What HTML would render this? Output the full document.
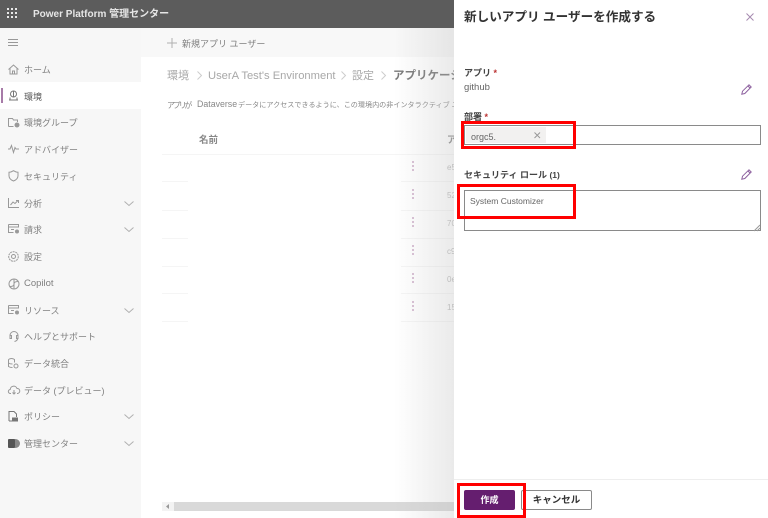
<!DOCTYPE html>
<html lang="ja"><head><meta charset="utf-8">
<style>
html,body{margin:0;padding:0;width:768px;height:518px;overflow:hidden;background:#fff}
body{position:relative;font-family:"Liberation Sans","Noto Sans CJK JP",sans-serif;color:#666;filter:blur(.35px)}
.a{position:absolute;white-space:nowrap}
.nav{position:absolute;left:24px;font-size:9px;line-height:14px;color:#808080;white-space:nowrap}
svg{position:absolute;overflow:visible}
.ic{fill:none;stroke:#999;stroke-width:1}
.ch{fill:none;stroke:#b0b0b0;stroke-width:1}
.dots{position:absolute;left:412px;width:2px;height:10px;background:repeating-linear-gradient(#d8bfd4 0 2px,transparent 2px 4px)}
.ln{position:absolute;height:1px;background:#f5f5f5}
.id{position:absolute;left:447px;font-size:8px;line-height:10px;color:#bdbdbd}
</style></head><body>
<div class="a" style="left:0;top:0;width:768px;height:28px;background:#5c5c5c"></div>
<svg style="left:7px;top:8px" width="12" height="12"><g fill="#e8e8e8"><rect x="0" y="0" width="2" height="2"/><rect x="4" y="0" width="2" height="2"/><rect x="8" y="0" width="2" height="2"/><rect x="0" y="4" width="2" height="2"/><rect x="4" y="4" width="2" height="2"/><rect x="8" y="4" width="2" height="2"/><rect x="0" y="8" width="2" height="2"/><rect x="4" y="8" width="2" height="2"/><rect x="8" y="8" width="2" height="2"/></g></svg>
<div class="a" style="left:33px;top:8px;font-size:10px;line-height:14px;font-weight:bold;color:#e6e6e6">Power Platform 管理センター</div>

<div class="a" style="left:0;top:28px;width:141px;height:490px;background:#f7f7f7"></div>
<div class="a" style="left:141px;top:28px;width:320px;height:29px;background:#f8f8f8"></div>
<div class="a" style="left:0;top:82px;width:141px;height:27px;background:#fff"></div>
<div class="a" style="left:1px;top:88px;width:2px;height:15px;background:#a77ba8"></div>

<svg style="left:8px;top:39px" width="10" height="8"><path class="ic" d="M0 .5H10M0 3.5H10M0 6.5H10"/></svg>
<svg style="left:8px;top:64px" width="11" height="11"><path class="ic" d="M.5 5.5L5.5 1l5 4.5M2 4.5V10h7V4.500M4.500 10V7h2v3"/></svg>
<svg style="left:8px;top:90px" width="11" height="11"><circle class="ic" cx="5.500" cy="4" r="3" style="stroke:#777"/><path class="ic" style="stroke:#777" d="M1 10h9M2 7.500v2.500M9 7.500v2.500M5.500 1v6"/></svg>
<svg style="left:8px;top:117px" width="12" height="11"><path class="ic" d="M.5 9.500V1.500h4l1 1.500h4v2M.5 9.500h5"/><circle cx="9" cy="8" r="2.500" fill="#999"/></svg>
<svg style="left:8px;top:144px" width="11" height="10"><path class="ic" d="M0 5h2l1.500-3.500L5.500 8.500 7 3.500 8 5h3"/></svg>
<svg style="left:8px;top:170px" width="11" height="12"><path class="ic" d="M5.500.7c1.500 1 3 1.500 4.500 1.500v3.500c0 2.500-2 4.300-4.500 5.300C3 10 1 8.200 1 5.700V2.200C2.500 2.200 4 1.700 5.500.7z"/></svg>
<svg style="left:8px;top:198px" width="11" height="10"><path class="ic" d="M.5 0v9.500H11M2.500 7l2.500-3 2 1.500 3-3M8 2.500h2.500V5"/></svg>
<svg style="left:8px;top:224px" width="12" height="10"><path class="ic" d="M.5.500h10v3M.5.500v8h5M.5 3h10M3 5.500h3"/><circle cx="9" cy="7.500" r="2" fill="#999"/></svg>
<svg style="left:8px;top:251px" width="11" height="11"><circle class="ic" cx="5.500" cy="5.500" r="2"/><circle class="ic" cx="5.500" cy="5.500" r="4.800" stroke-dasharray="2 .7"/></svg>
<svg style="left:8px;top:278px" width="12" height="12"><circle class="ic" cx="6" cy="6" r="5"/><path class="ic" d="M6 1v10M2 8.500c3 0 4-1 4-2.500M10 3.500C7.500 3.500 6 4.500 6 6"/></svg>
<svg style="left:8px;top:305px" width="12" height="10"><path class="ic" d="M.5.500h10v3M.5.500v8h5M.5 3h10M3 5.500h3"/><circle cx="9" cy="7.500" r="2" fill="#999"/></svg>
<svg style="left:9px;top:331px" width="10" height="12"><path class="ic" d="M1 6V4.500a4 4 0 0 1 8 0V6c0 2.500-1.500 4-3.500 4.500M1 4.500v3h1.500v-3zM7.500 4.500v3H9v-3z"/></svg>
<svg style="left:8px;top:358px" width="12" height="11"><path class="ic" d="M.5 1.500q3-2 6 0v3M.5 1.500v7q1.500 1 4 1M.5 5q1.500 1 4 1"/><circle class="ic" cx="8" cy="8" r="2"/></svg>
<svg style="left:8px;top:385px" width="12" height="10"><path class="ic" d="M3 8.500H2.500a2 2 0 0 1-.3-4A3.500 3.500 0 0 1 9 3.500a2.500 2.500 0 0 1 .5 5H9M6 5v4M4.500 7.500L6 9l1.500-1.500"/></svg>
<svg style="left:8px;top:411px" width="12" height="11"><path class="ic" style="stroke:#777" d="M1 10V.5h5L8.500 3v3M1 10h4"/><rect x="4" y="6.500" width="6" height="4" fill="#777"/></svg>
<svg style="left:8px;top:438px" width="12" height="11"><rect x="3" y="1" width="9" height="9" rx="4.500" fill="#888"/><rect x="0" y="1" width="7" height="9" rx="1" fill="#555"/></svg>

<div class="nav" style="top:63px">ホーム</div>
<div class="nav" style="top:90px;color:#555">環境</div>
<div class="nav" style="top:116px">環境グループ</div>
<div class="nav" style="top:143px">アドバイザー</div>
<div class="nav" style="top:170px">セキュリティ</div>
<div class="nav" style="top:197px">分析</div>
<div class="nav" style="top:223px">請求</div>
<div class="nav" style="top:250px">設定</div>
<div class="nav" style="top:277px;font-size:9.5px">Copilot</div>
<div class="nav" style="top:304px">リソース</div>
<div class="nav" style="top:330px">ヘルプとサポート</div>
<div class="nav" style="top:357px">データ統合</div>
<div class="nav" style="top:384px">データ (プレビュー)</div>
<div class="nav" style="top:410px">ポリシー</div>
<div class="nav" style="top:437px">管理センター</div>
<svg style="left:124px;top:201px" width="10" height="5"><path class="ch" d="M.5.500L5 4.500 9.500.500"/></svg>
<svg style="left:124px;top:227px" width="10" height="5"><path class="ch" d="M.5.500L5 4.500 9.500.500"/></svg>
<svg style="left:124px;top:308px" width="10" height="5"><path class="ch" d="M.5.500L5 4.500 9.500.500"/></svg>
<svg style="left:124px;top:414px" width="10" height="5"><path class="ch" d="M.5.500L5 4.500 9.500.500"/></svg>
<svg style="left:124px;top:441px" width="10" height="5"><path class="ch" d="M.5.500L5 4.500 9.500.500"/></svg>

<svg style="left:167px;top:38px" width="10" height="10"><path fill="none" stroke="#b0b0b0" d="M5 0V10M0 5H10"/></svg>
<div class="a" style="left:182px;top:37px;font-size:9px;line-height:14px;color:#808080">新規アプリ ユーザー</div>
<div class="a" style="left:167px;top:68px;font-size:11px;line-height:16px;color:#a8a8a8">環境</div>
<svg style="left:197px;top:71px" width="6" height="9"><path fill="none" stroke="#ccc" d="M.5.500L4.500 4.500.5 8.500"/></svg>
<div class="a" style="left:208px;top:68px;font-size:11.200px;line-height:16px;color:#a8a8a8">UserA Test's Environment</div>
<svg style="left:341px;top:71px" width="6" height="9"><path fill="none" stroke="#ccc" d="M.5.500L4.500 4.500.5 8.500"/></svg>
<div class="a" style="left:352px;top:68px;font-size:11px;line-height:16px;color:#a8a8a8">設定</div>
<svg style="left:381px;top:71px" width="6" height="9"><path fill="none" stroke="#ccc" d="M.5.500L4.500 4.500.5 8.500"/></svg>
<div class="a" style="left:393px;top:68px;width:61px;overflow:hidden;font-size:11.500px;line-height:16px;font-weight:bold;color:#777">アプリケーション</div>
<div class="a" style="left:167px;top:99px;font-size:8px;letter-spacing:-2.200px;line-height:13px;color:#888">アプリが</div>
<div class="a" style="left:197px;top:98px;font-size:8.800px;line-height:13px;color:#888">Dataverse</div>
<div class="a" style="left:238px;top:99px;width:216px;overflow:hidden;font-size:7.100px;line-height:13px;color:#888">データにアクセスできるように、この環境内の非インタラクティブ ユーザー</div>
<div class="a" style="left:199px;top:134px;font-size:9.500px;line-height:14px;font-weight:bold;color:#888">名前</div>
<div class="a" style="left:447px;top:134px;font-size:9.500px;line-height:14px;font-weight:bold;color:#888">ア</div>
<div class="ln" style="left:162px;top:154px;width:292px"></div>
<div class="dots" style="top:161px"></div><div class="id" style="top:163px">e5</div>
<div class="ln" style="left:162px;top:181px;width:26px"></div><div class="ln" style="left:401px;top:181px;width:53px"></div>
<div class="dots" style="top:189px"></div><div class="id" style="top:191px">52</div>
<div class="ln" style="left:162px;top:210px;width:26px"></div><div class="ln" style="left:401px;top:210px;width:53px"></div>
<div class="dots" style="top:217px"></div><div class="id" style="top:219px">70</div>
<div class="ln" style="left:162px;top:238px;width:26px"></div><div class="ln" style="left:401px;top:238px;width:53px"></div>
<div class="dots" style="top:245px"></div><div class="id" style="top:247px">c9</div>
<div class="ln" style="left:162px;top:266px;width:26px"></div><div class="ln" style="left:401px;top:266px;width:53px"></div>
<div class="dots" style="top:273px"></div><div class="id" style="top:275px">0e</div>
<div class="ln" style="left:162px;top:293px;width:26px"></div><div class="ln" style="left:401px;top:293px;width:53px"></div>
<div class="dots" style="top:301px"></div><div class="id" style="top:303px">15</div>
<div class="ln" style="left:162px;top:321px;width:26px"></div><div class="ln" style="left:401px;top:321px;width:53px"></div>

<div class="a" style="left:162px;top:502px;width:292px;height:9px;background:#d9d9d9"></div>
<div class="a" style="left:162px;top:502px;width:12px;height:9px;background:#f3f3f3"></div>
<svg style="left:166px;top:504px" width="4" height="5"><path fill="#999" d="M3 0v5L0 2.500z"/></svg>

<div class="a" style="left:394px;top:28px;width:60px;height:490px;background:linear-gradient(to right,rgba(190,190,190,0),rgba(190,190,190,.32))"></div>

<div class="a" style="left:454px;top:0;width:314px;height:518px;background:#fff"></div>
<div class="a" style="left:464px;top:8px;font-size:12.600px;line-height:18px;font-weight:bold;color:#333">新しいアプリ ユーザーを作成する</div>
<svg style="left:746px;top:13px" width="9" height="9"><path fill="none" stroke="#a58ab0" d="M.5.500l7 7M7.500.500l-7 7"/></svg>
<div class="a" style="left:464px;top:65.500px;font-size:9px;line-height:14px;font-weight:bold;color:#444">アプリ <span style="color:#b33">*</span></div>
<div class="a" style="left:464px;top:81px;font-size:9.500px;line-height:14px;color:#666">github</div>
<svg style="left:741px;top:84px" width="11" height="11"><path fill="none" stroke="#8c5f9e" d="M.8 10.200l.7-3L8 .8l2.200 2.200-6.400 6.500zM7 2l2 2"/></svg>
<div class="a" style="left:464px;top:109.500px;font-size:9px;line-height:14px;font-weight:bold;color:#444">部署 <span style="color:#b33">*</span></div>
<div class="a" style="left:464px;top:125px;width:295px;height:18px;border:1px solid #8a8a8a"></div>
<div class="a" style="left:466px;top:127px;width:80px;height:16px;background:#f2f1f0"></div>
<div class="a" style="left:471px;top:129.500px;font-size:9px;line-height:14px;color:#666">orgc5.</div>
<svg style="left:534px;top:132px" width="7" height="7"><path fill="none" stroke="#999" d="M.5.500l5.500 5.500M6 .5L.5 6"/></svg>
<div class="a" style="left:464px;top:167.500px;font-size:9px;line-height:14px;font-weight:bold;color:#444">セキュリティ ロール <span style="font-size:8.500px">(1)</span></div>
<svg style="left:741px;top:169px" width="11" height="11"><path fill="none" stroke="#8c5f9e" d="M.8 10.200l.7-3L8 .8l2.200 2.200-6.400 6.500zM7 2l2 2"/></svg>
<div class="a" style="left:464px;top:190px;width:295px;height:39px;border:1px solid #8a8a8a"></div>
<svg style="left:754px;top:225px" width="6" height="6"><path fill="none" stroke="#999" d="M0 6L6 0M3 6l3-3"/></svg>
<div class="a" style="left:470px;top:193.500px;font-size:8.500px;line-height:14px;color:#666">System Customizer</div>
<div class="a" style="left:454px;top:479px;width:314px;height:1px;background:#eee"></div>
<div class="a" style="left:464px;top:490px;width:51px;height:20px;background:#651e6f;border-radius:2px;color:#fff;font-size:9px;font-weight:bold;line-height:21px;text-align:center">作成</div>
<div class="a" style="left:521px;top:490px;width:69px;height:18px;border:1px solid #8a8a8a;border-radius:2px;background:#fff;color:#333;font-size:9.500px;font-weight:bold;line-height:20px;text-align:center">キャンセル</div>

<div class="a" style="left:461px;top:121px;width:109px;height:22px;border:3px solid #f00"></div>
<div class="a" style="left:457px;top:184px;width:113px;height:29px;border:3px solid #f00"></div>
<div class="a" style="left:457px;top:483px;width:63px;height:29px;border:3px solid #f00"></div>
</body></html>
